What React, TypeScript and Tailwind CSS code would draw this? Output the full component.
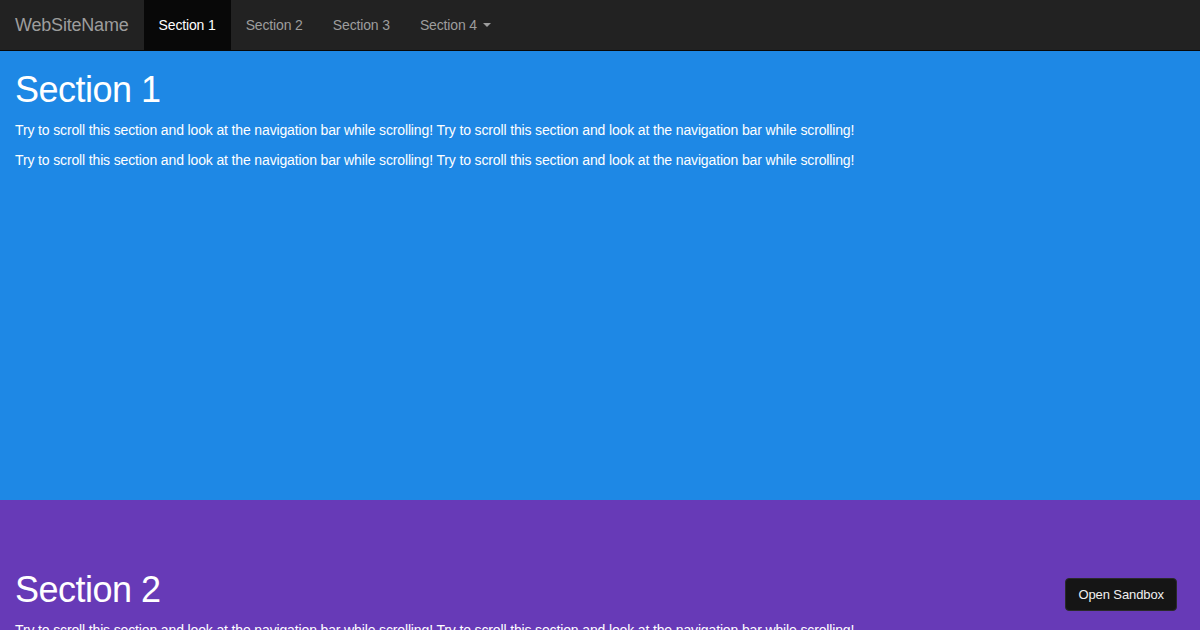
import React from 'react';

const text = 'Try to scroll this section and look at the navigation bar while scrolling! Try to scroll this section and look at the navigation bar while scrolling!';

const sections = [
  { id: 'section1', title: 'Section 1', bg: 'bg-[#1E88E5]' },
  { id: 'section2', title: 'Section 2', bg: 'bg-[#673ab7]' },
  { id: 'section3', title: 'Section 3', bg: 'bg-[#ff9800]' },
];

const links = ['Section 1', 'Section 2', 'Section 3'];

export default function App() {
  return (
    <div className="relative font-['Liberation_Sans',Arial,sans-serif] text-[14px] leading-[20px] text-[#333] tracking-[-0.14px]">
      <nav className="fixed top-0 left-0 right-0 z-10 h-[51px] bg-[#222] border-b border-[#080808] flex">
        <a className="px-[15px] py-[15px] text-[18px] leading-[20px] text-[#9d9d9d] tracking-[-0.2px]">WebSiteName</a>
        <ul className="flex">
          {links.map((l, i) => (
            <li key={l}>
              <a
                className={
                  'block px-[15px] py-[15px] leading-[20px] ' +
                  (i === 0 ? 'bg-[#080808] text-white' : 'text-[#9d9d9d]')
                }
              >
                {l}
              </a>
            </li>
          ))}
          <li>
            <a className="flex items-center px-[15px] py-[15px] leading-[20px] text-[#9d9d9d]">
              Section 4
              <span className="ml-[6px] inline-block w-0 h-0 border-t-[4px] border-t-[#9d9d9d] border-x-[4px] border-x-transparent" />
            </a>
          </li>
        </ul>
      </nav>

      {sections.map((s) => (
        <div key={s.id} className={`${s.bg} h-[500px] pt-[50px] px-[15px] text-white`}>
          <h1 className="mt-[20px] mb-[10px] text-[36px] leading-[1.1] font-normal tracking-[-0.5px]">{s.title}</h1>
          <p className="mb-[10px]">{text}</p>
          <p className="mb-[10px]">{text}</p>
        </div>
      ))}

      <button className="fixed right-[23px] bottom-[19px] h-[33px] px-[12px] rounded-[4px] bg-[#151515] border border-[#2a2a2a] text-[13px] text-[#f0f0f0] tracking-[-0.1px] font-['Liberation_Sans',Arial,sans-serif]">
        Open Sandbox
      </button>
    </div>
  );
}
